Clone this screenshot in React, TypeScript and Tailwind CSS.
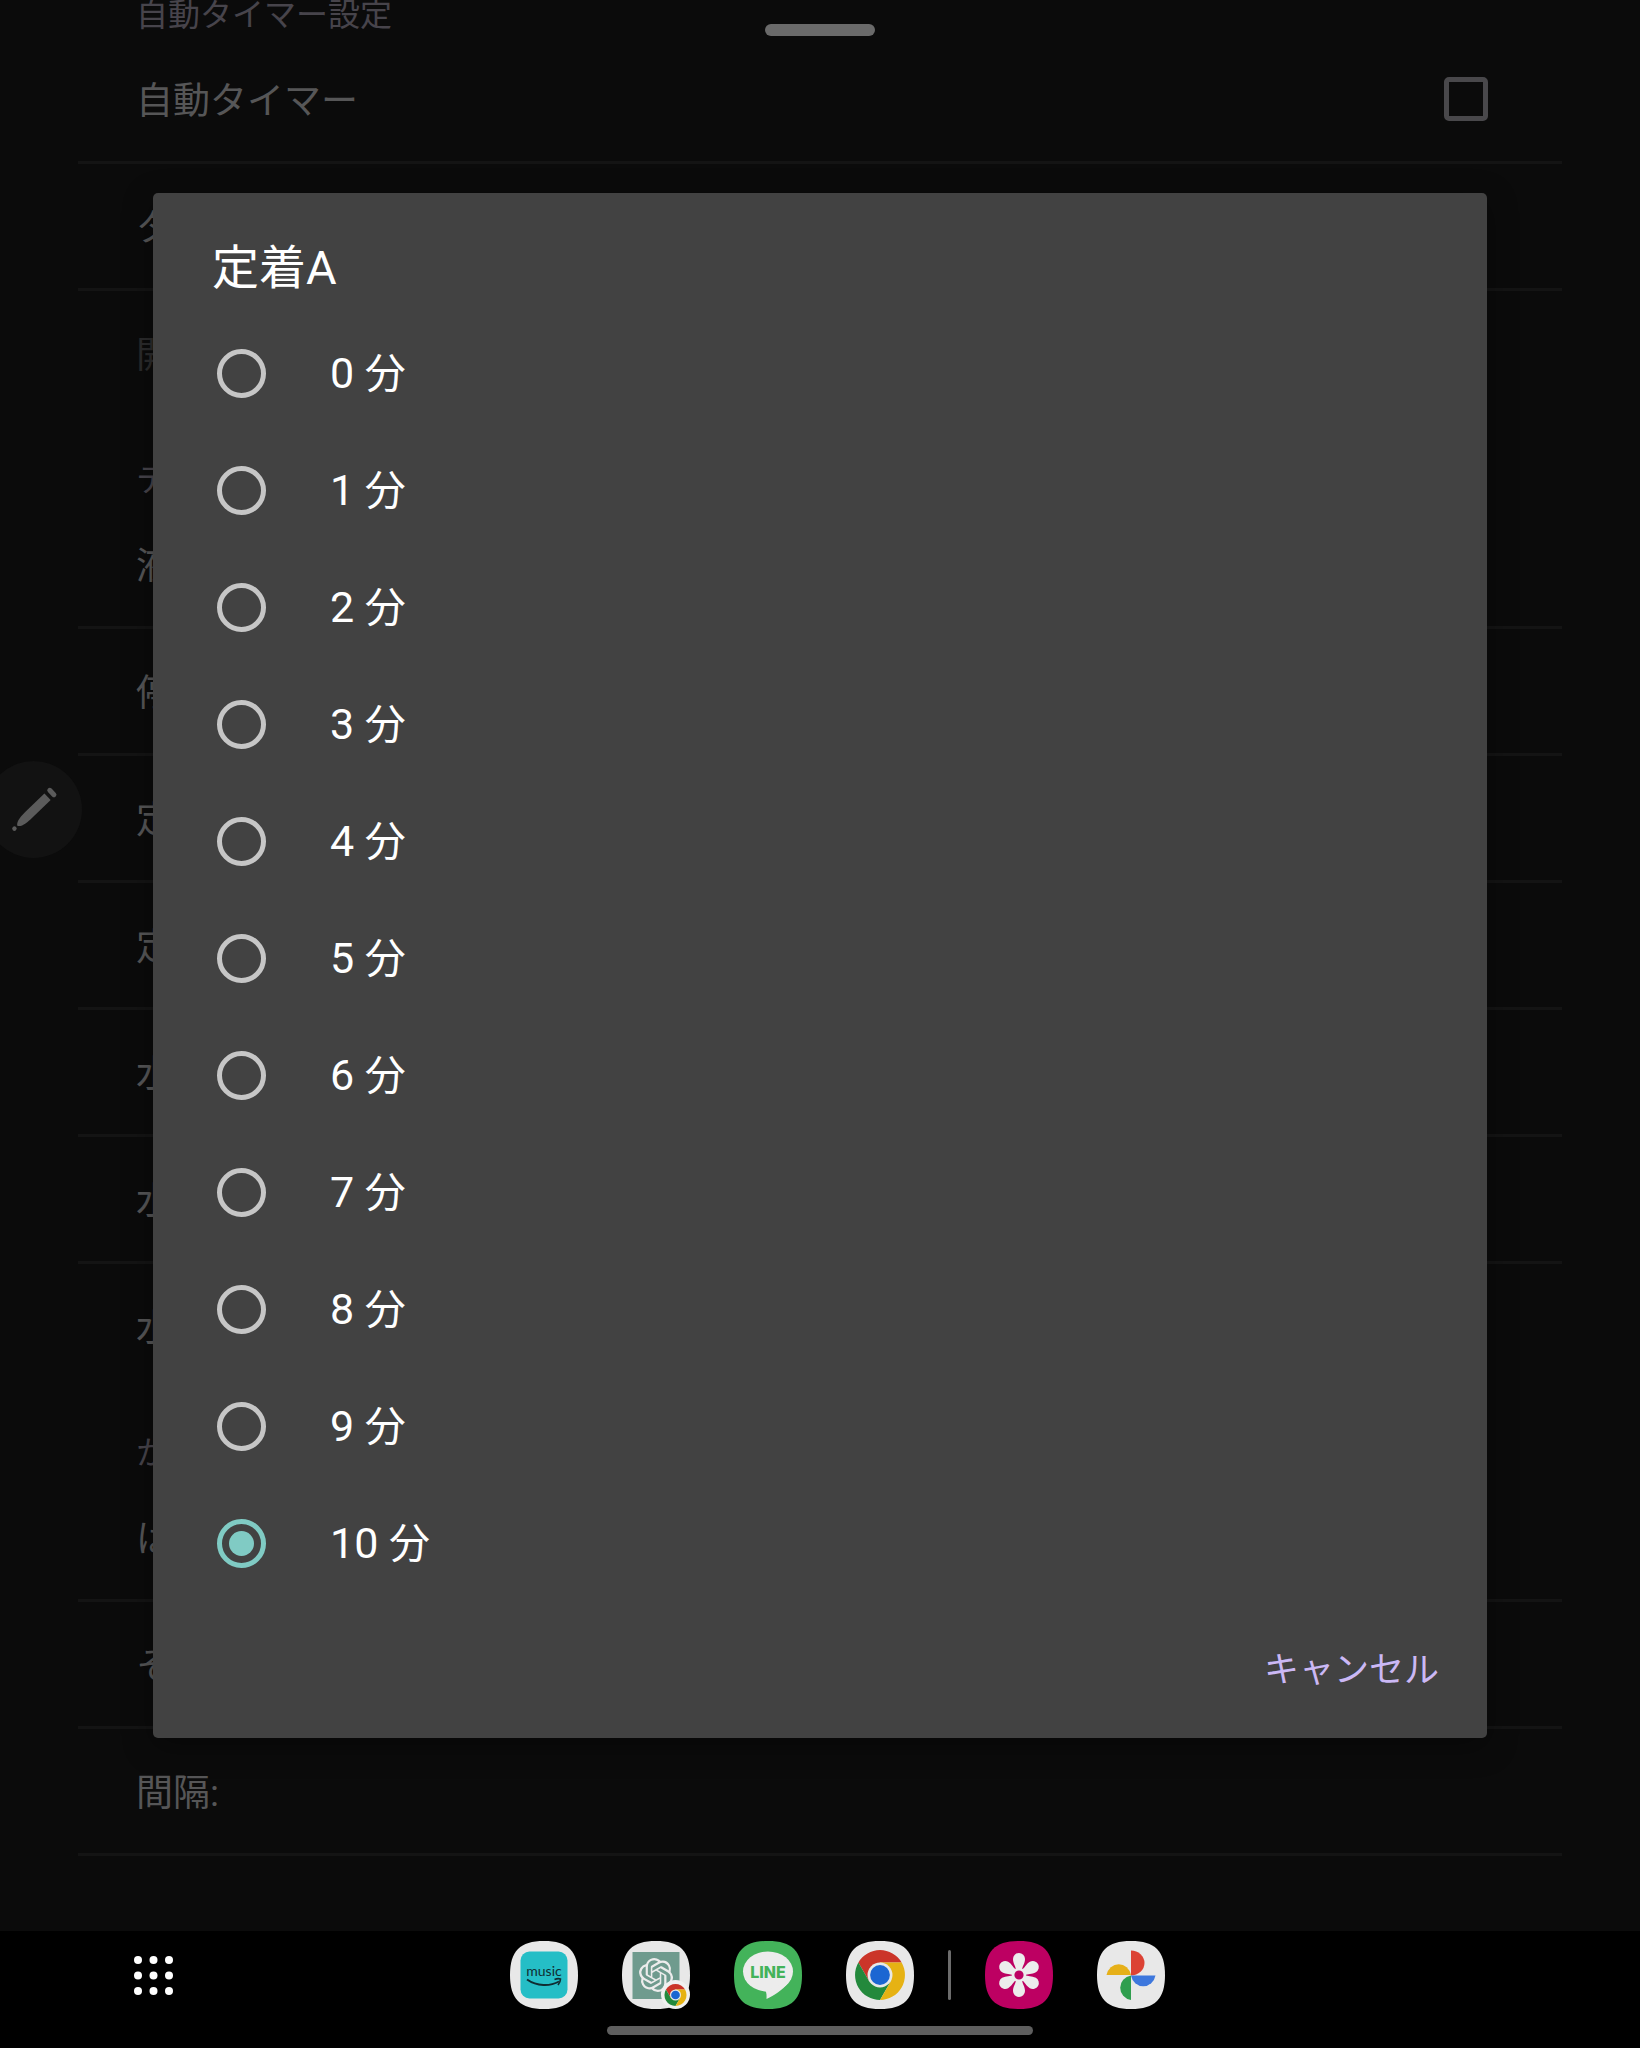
import { useState } from "react";
import type { ReactNode } from "react";

type Entry = {
  label: string;
  kind?: "heading" | "disabled";
  divider?: boolean;
};

const entries: Entry[] = [
  { label: "タ", divider: true },
  { label: "開", kind: "disabled" },
  { label: "テ", kind: "heading" },
  { label: "液", divider: true },
  { label: "停", divider: true },
  { label: "定", divider: true },
  { label: "定", divider: true },
  { label: "水", divider: true },
  { label: "水", divider: true },
  { label: "水" },
  { label: "か", kind: "heading" },
  { label: "は", divider: true },
  { label: "そ", divider: true },
  { label: "間隔:", divider: true },
];

const minutes = [0, 1, 2, 3, 4, 5, 6, 7, 8, 9, 10];

const squircle = "M34 0C58 0 68 10 68 34S58 68 34 68S0 58 0 34S10 0 34 0Z";

function Heading({ children }: { children: ReactNode }) {
  return (
    <h2 className="flex h-[84px] items-end px-[58px] pb-[6px] text-[32px] leading-8 text-[#47444b]">
      {children}
    </h2>
  );
}

function Row({ entry }: { entry: Entry }) {
  if (entry.kind === "heading") return <Heading>{entry.label}</Heading>;
  return (
    <div
      className={
        "flex h-[127px] items-center border-b-[3px] px-[58px] pt-1 text-[37px] leading-none " +
        (entry.divider ? "border-[#141414] " : "border-transparent ") +
        (entry.kind === "disabled" ? "text-[#2b2b2c]" : "text-[#565657]")
      }
    >
      {entry.label}
    </div>
  );
}

function ChromeMark() {
  return (
    <>
      <path d="M20.78-12A24 24 0 0 0-20.78-12L-10.39 6L0-12Z" fill="#cb3529" />
      <path d="M-20.78-12A24 24 0 0 0 0 24L10.39 6L-10.39 6Z" fill="#23893c" />
      <path d="M0 24A24 24 0 0 0 20.78-12L0-12L10.39 6Z" fill="#e6b213" />
      <circle r="12" fill="#e8e8e8" />
      <circle r="9.5" fill="#1b66d2" />
    </>
  );
}

function AppButton({ name, children }: { name: string; children: ReactNode }) {
  return (
    <button type="button" aria-label={name} className="size-[68px] shrink-0">
      <svg viewBox="0 0 68 68" className="size-full">
        {children}
      </svg>
    </button>
  );
}

function Dock() {
  return (
    <footer className="flex h-[117px] shrink-0 flex-col items-center bg-black">
      <div className="grid w-full grid-cols-[1fr_auto_1fr] items-center pt-[10px] pl-[34px]">
        <button type="button" aria-label="アプリ" className="ml-[100px] size-[39px]">
          <svg viewBox="0 0 39 39" className="size-full" fill="#fff">
            {[4, 19.5, 35].map((y) =>
              [4, 19.5, 35].map((x) => <circle key={`${x}-${y}`} cx={x} cy={y} r="4" />),
            )}
          </svg>
        </button>
        <nav className="flex items-center gap-11">
          <AppButton name="Amazon Music">
            <path d={squircle} fill="#e8e8e8" />
            <rect x="10.500" y="10.500" width="47" height="47" rx="9" fill="#25bec6" />
            <text x="34" y="34.500" textAnchor="middle" fontSize="14" fill="#102c31" className="font-[Lato,sans-serif]">
              music
            </text>
            <path d="M17 38.500C27 45.500 40 45.500 49 40.500" fill="none" stroke="#102c31" strokeWidth="2" />
            <path d="M44.500 38.500C47 37.500 49 37.500 50.500 38C50.500 40 49.500 42 48 44" fill="none" stroke="#102c31" strokeWidth="1.600" />
          </AppButton>
          <AppButton name="ChatGPT">
            <path d={squircle} fill="#e8e8e8" />
            <rect x="10.500" y="11" width="47" height="47" fill="#6f9b8e" />
            <path
              transform="translate(17 17) scale(1.42)"
              fill="#ececec"
              d="M22.2819 9.8211a5.9847 5.9847 0 0 0-.5157-4.9108 6.0462 6.0462 0 0 0-6.5098-2.9A6.0651 6.0651 0 0 0 4.9807 4.1818a5.9847 5.9847 0 0 0-3.9977 2.9 6.0462 6.0462 0 0 0 .7427 7.0966 5.98 5.98 0 0 0 .511 4.9107 6.051 6.051 0 0 0 6.5146 2.9001A5.9847 5.9847 0 0 0 13.2599 24a6.0557 6.0557 0 0 0 5.7718-4.2058 5.9894 5.9894 0 0 0 3.9977-2.9001 6.0557 6.0557 0 0 0-.7475-7.0729zm-9.022 12.6081a4.4755 4.4755 0 0 1-2.8764-1.0408l.1419-.0804 4.7783-2.7582a.7948.7948 0 0 0 .3927-.6813v-6.7369l2.02 1.1686a.071.071 0 0 1 .038.052v5.5826a4.504 4.504 0 0 1-4.4945 4.4944zm-9.6607-4.1254a4.4708 4.4708 0 0 1-.5346-3.0137l.142.0852 4.783 2.7582a.7712.7712 0 0 0 .7806 0l5.8428-3.3685v2.3324a.0804.0804 0 0 1-.0332.0615L9.74 19.9502a4.4992 4.4992 0 0 1-6.1408-1.6464zM2.3408 7.8956a4.485 4.485 0 0 1 2.3655-1.9728V11.6a.7664.7664 0 0 0 .3879.6765l5.8144 3.3543-2.0201 1.1685a.0757.0757 0 0 1-.071 0l-4.8303-2.7865A4.504 4.504 0 0 1 2.3408 7.872zm16.5963 3.8558L13.1038 8.364 15.1192 7.2a.0757.0757 0 0 1 .071 0l4.8303 2.7913a4.4944 4.4944 0 0 1-.6765 8.1042v-5.6772a.79.79 0 0 0-.407-.667zm2.0107-3.0231l-.142-.0852-4.7735-2.7818a.7759.7759 0 0 0-.7854 0L9.409 9.2297V6.8974a.0662.0662 0 0 1 .0284-.0615l4.8303-2.7866a4.4992 4.4992 0 0 1 6.6802 4.66zM8.3065 12.863l-2.02-1.1638a.0804.0804 0 0 1-.038-.0567V6.0742a4.4992 4.4992 0 0 1 7.3757-3.4537l-.142.0805L8.704 5.459a.7948.7948 0 0 0-.3927.6813zm1.0976-2.3654l2.602-1.4998 2.6069 1.4998v2.9994l-2.5974 1.4997-2.6067-1.4997Z"
            />
            <circle cx="53.500" cy="53.500" r="14.500" fill="#f0f0f0" />
            <g transform="translate(53.500 54) scale(.46)">
              <ChromeMark />
            </g>
          </AppButton>
          <AppButton name="LINE">
            <path d={squircle} fill="#43b35a" />
            <ellipse cx="34" cy="30.500" rx="25" ry="20" fill="#ececec" />
            <path d="M31 49C33 52 32.500 55 32.500 58C39 55 49 49 54 42Z" fill="#ececec" />
            <text x="34" y="37" textAnchor="middle" fontSize="16" fontWeight="800" fill="#43b35a" className="font-[Inter,sans-serif]">
              LINE
            </text>
          </AppButton>
          <AppButton name="Chrome">
            <path d={squircle} fill="#e8e8e8" />
            <g transform="translate(34 34) scale(1.04)">
              <ChromeMark />
            </g>
          </AppButton>
          <span className="-mx-[10px] h-[50px] w-[3px] rounded-full bg-[#6c6c6c]" />
          <AppButton name="ギャラリー">
            <path d={squircle} fill="#bd0062" />
            <g transform="translate(34 34)" fill="#ececec">
              {[0, 60, 120, 180, 240, 300].map((angle) => (
                <path
                  key={angle}
                  transform={`rotate(${angle})`}
                  d="M-3-4C-3-9-6-11-6-16A6 6 0 0 1 6-16C6-11 3-9 3-4Z"
                />
              ))}
              <circle r="7" />
              <circle r="4.600" fill="#bd0062" />
            </g>
          </AppButton>
          <AppButton name="フォト">
            <path d={squircle} fill="#e8e8e8" />
            <path d="M34 9.500A13.500 12.500 0 0 1 34 34.500Z" fill="#dc4234" />
            <path d="M58.500 34.500A12.500 13.500 0 0 1 34 34.500Z" fill="#3d77dd" />
            <path d="M34 59A13.500 12.500 0 0 1 34 34.500Z" fill="#2f9e4e" />
            <path d="M9.500 34A12.500 13.500 0 0 1 34 34Z" fill="#e6b019" />
          </AppButton>
        </nav>
      </div>
      <div className="mt-[17px] h-[9px] w-[426px] rounded-full bg-[#5e5e5e]" />
    </footer>
  );
}

export default function App() {
  const [selected, setSelected] = useState(10);

  return (
    <div className="flex h-screen flex-col overflow-hidden bg-[#0b0b0b] font-[Roboto,'Noto_Sans_CJK_JP',sans-serif]">
      <main className="relative min-h-0 flex-1 overflow-hidden">
        <section className="-mt-[47px] px-[78px]">
          <Heading>自動タイマー設定</Heading>
          <label className="flex h-[127px] items-center justify-between border-b-[3px] border-[#141414] px-[58px] pt-1 text-[37px] leading-none text-[#565657]">
            自動タイマー
            <input
              type="checkbox"
              className="mr-4 mb-1 size-11 appearance-none rounded-[5px] border-[5px] border-[#49484b] checked:bg-[#49484b]"
            />
          </label>
          {entries.map((entry, i) => (
            <Row key={i} entry={entry} />
          ))}
        </section>

        <div className="absolute top-6 left-1/2 h-3 w-[110px] -translate-x-1/2 rounded-full bg-[#6a6a6a]" />

        <button
          type="button"
          aria-label="ペン"
          className="absolute top-[761px] -left-[15px] size-[97px] rounded-full bg-[#121212]"
        >
          <svg viewBox="0 0 97 97" className="size-full" fill="#5b5b5b">
            <g transform="translate(28 69) rotate(-44)">
              <circle cx="2" cy="0" r="2.200" />
              <path d="M6 0C8-4 16-4.500 22-4.500H48V4.500H22C16 4.500 8 4 6 0Z" />
              <rect x="51.500" y="-5.500" width="5" height="11" rx="2.500" />
            </g>
          </svg>
        </button>

        <div className="absolute inset-0 flex items-center justify-center px-[153px]">
          <div
            role="dialog"
            aria-labelledby="dialog-title"
            className="w-full rounded-[5px] bg-[#424242] text-white shadow-[0_8px_30px_rgba(0,0,0,0.35)]"
          >
            <h1
              id="dialog-title"
              className="flex h-[122px] items-center px-[59px] pt-[26px] text-[47px] leading-none"
            >
              定着A
            </h1>
            <div role="radiogroup" aria-labelledby="dialog-title">
              {minutes.map((m) => (
                <label key={m} className="flex h-[117px] items-center gap-16 pl-16 text-[43px] leading-none">
                  <input
                    type="radio"
                    name="minutes"
                    checked={selected === m}
                    onChange={() => setSelected(m)}
                    className="grid size-[49px] shrink-0 appearance-none place-items-center rounded-full border-[5px] border-[#c6c6c6] before:size-[25px] before:rounded-full before:bg-transparent checked:border-[#80cbc4] checked:before:bg-[#80cbc4]"
                  />
                  <span>
                    {m} <span className="text-[41px]">分</span>
                  </span>
                </label>
              ))}
            </div>
            <div className="flex h-[136px] items-center justify-end pr-[48px]">
              <button type="button" className="text-[35px] leading-none text-[#cbb8f5]">
                キャンセル
              </button>
            </div>
          </div>
        </div>
      </main>
      <Dock />
    </div>
  );
}
